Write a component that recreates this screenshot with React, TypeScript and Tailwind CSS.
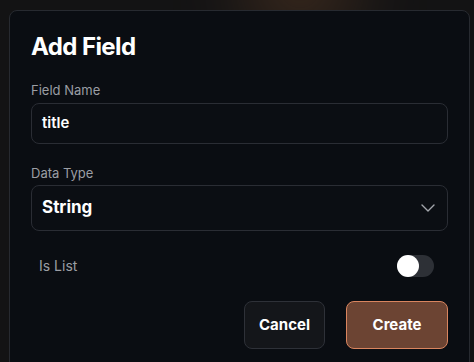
import React from 'react';
import { ChevronDown } from 'lucide-react';

export default function App() {
  return (
    <div className="relative h-[362px] w-[474px] overflow-hidden bg-[#131314] pl-[9px] pt-[10px] font-['Inter',sans-serif]">
      {/* warm glow behind the dialog */}
      <div className="pointer-events-none absolute left-[250px] top-[-40px] h-[60px] w-[100px] rounded-full bg-[#8a5530] opacity-60 blur-2xl" />

      <div className="relative h-[380px] w-[461px] rounded-lg border border-[#272a30] bg-[#0a0d12] pl-[21px] pr-[21px] pt-5">
        <h2 className="text-2xl leading-8 font-bold tracking-tight text-white">Add Field</h2>

        <label className="mt-[17px] block text-[13px] leading-5 text-[#9b9ea4]">Field Name</label>
        <div className="mt-[3px] flex h-[41px] items-center rounded-lg border border-[#2a2d34] bg-[#0b0e13] px-[10px]">
          <span className="text-[15px] font-semibold text-white">title</span>
        </div>

        <label className="mt-[19px] block text-[13px] leading-5 text-[#9b9ea4]">Data Type</label>
        <div className="mt-[2px] flex h-[46px] items-center justify-between rounded-lg border border-[#2a2d34] bg-[#0b0e13] pl-[10px] pr-[7px]">
          <span className="text-[17px] font-bold text-white">String</span>
          <ChevronDown size={24} strokeWidth={1.4} className="text-[#a3a6ac]" />
        </div>

        <div className="mt-6 flex h-[22px] items-center justify-between pl-2 pr-[14px]">
          <span className="text-sm text-[#9b9ea4]">Is List</span>
          <div className="relative h-[22px] w-[37px] rounded-full bg-[#2d3036]">
            <div className="absolute left-0 top-0 h-[22px] w-[22px] rounded-full bg-white" />
          </div>
        </div>

        <div className="mt-6 flex justify-end gap-[21px]">
          <button className="h-12 w-[81px] rounded-lg border border-[#2e3138] bg-[#14161a] text-[15px] font-bold text-white">
            Cancel
          </button>
          <button className="h-12 w-[102px] rounded-lg border-[1.5px] border-[#d9855f] bg-[#6c4433] text-[15px] font-bold text-white">
            Create
          </button>
        </div>
      </div>
    </div>
  );
}
